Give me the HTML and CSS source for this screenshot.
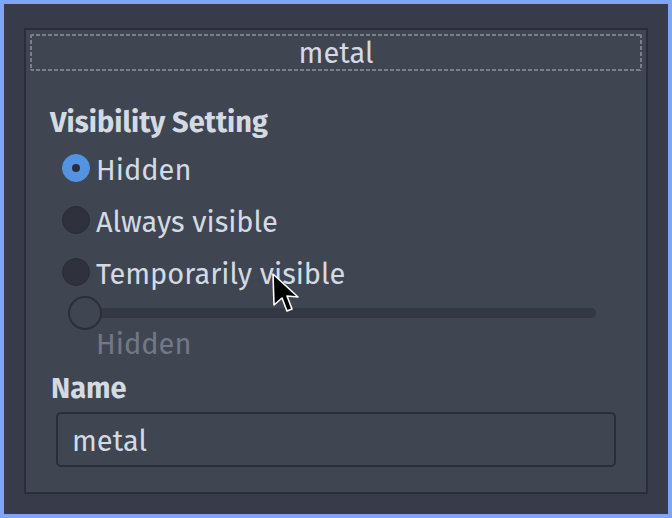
FILE: index.html
```html
<!DOCTYPE html>
<html>
<head>
<meta charset="utf-8">
<link rel="stylesheet" href="styles.css">
</head>
<body>
<div class="window">
  <div class="panel">
    <div class="title">metal</div>
    <div class="content">
      <div class="section-label vis-label">Visibility Setting</div>
      <div class="radios">
        <div class="radio-row"><span class="radio checked"></span><span class="radio-text">Hidden</span></div>
        <div class="radio-row"><span class="radio"></span><span class="radio-text">Always visible</span></div>
        <div class="radio-row"><span class="radio"></span><span class="radio-text">Temporarily visible</span></div>
      </div>
      <div class="slider"><div class="track"></div><div class="knob"></div></div>
      <div class="slider-label">Hidden</div>
      <div class="section-label name-label">Name</div>
      <div class="entry">metal</div>
    </div>
  </div>
  <svg class="cursor" width="30" height="42" viewBox="0 0 30 42">
    <path d="M2 2 L3 33 L11 26 L16 39 L21 37 L16 24 L27 25 Z" fill="#000" stroke="#fff" stroke-width="1.6" stroke-linejoin="round"/>
  </svg>
</div>
</body>
</html>
```
FILE: styles.css
```css
html, body {
  margin: 0;
  padding: 0;
}
body {
  width: 672px;
  height: 518px;
  overflow: hidden;
  font-family: "Fira Sans", "Noto Sans", "Open Sans", sans-serif;
  color: #d3dae3;
}
.window {
  position: relative;
  box-sizing: border-box;
  width: 672px;
  height: 518px;
  border: 4px solid #7ea6f5;
  background: #383c4a;
  padding: 24px 20px 20px 20px;
}
.panel {
  box-sizing: border-box;
  width: 624px;
  height: 466px;
  border: 2px solid #2b2e39;
  background: #404552;
  padding: 4px;
}
.title {
  box-sizing: border-box;
  height: 37px;
  padding-top: 2px;
  border-radius: 2px;
  background:
    repeating-linear-gradient(90deg, #7a7f8a 0 4px, transparent 4px 6px) left top / 100% 2px no-repeat,
    repeating-linear-gradient(90deg, #7a7f8a 0 4px, transparent 4px 6px) left bottom / 100% 2px no-repeat,
    repeating-linear-gradient(180deg, #7a7f8a 0 4px, transparent 4px 6px) left top / 2px 100% no-repeat,
    repeating-linear-gradient(180deg, #7a7f8a 0 4px, transparent 4px 6px) right top / 2px 100% no-repeat;
  text-align: center;
  font-size: 29px;
  line-height: 35px;
}
.content {
  padding-left: 20px;
}
.section-label {
  font-weight: bold;
  font-size: 29px;
  line-height: 30px;
}
.vis-label {
  margin-top: 37px;
}
.radios {
  margin-top: 16px;
  padding-left: 12px;
  display: flex;
  flex-direction: column;
  gap: 24px;
}
.radio-row {
  display: flex;
  align-items: center;
  height: 28px;
}
.radio {
  box-sizing: border-box;
  flex: none;
  width: 28px;
  height: 28px;
  border-radius: 50%;
  background: #2f323d;
  border: 1px solid #292c36;
  margin-right: 6px;
  position: relative;
}
.radio.checked {
  background: #5294e2;
  border-color: #5294e2;
}
.radio.checked::after {
  content: "";
  position: absolute;
  left: 50%;
  top: 50%;
  width: 8px;
  height: 8px;
  margin: -4px 0 0 -4px;
  border-radius: 50%;
  background: #2b2e39;
}
.radio-text {
  font-size: 29px;
  line-height: 28px;
  position: relative;
  top: 3px;
}
.slider {
  position: relative;
  margin-top: 10px;
  margin-left: 18px;
  width: 528px;
  height: 34px;
}
.track {
  position: absolute;
  left: 0;
  right: 0;
  top: 12px;
  height: 10px;
  border-radius: 5px;
  background: #343845;
}
.knob {
  position: absolute;
  left: 0;
  top: 0;
  box-sizing: border-box;
  width: 34px;
  height: 34px;
  border-radius: 50%;
  border: 2px solid #2c2f3a;
  background: #404552;
}
.slider-label {
  padding-left: 46px;
  font-size: 29px;
  line-height: 28px;
  color: #737886;
  margin-top: 1px;
}
.name-label {
  margin-top: 15px;
  padding-left: 1px;
}
.entry {
  box-sizing: border-box;
  margin-top: 8px;
  margin-left: 6px;
  width: 560px;
  height: 55px;
  border: 2px solid #2b2e39;
  border-radius: 5px;
  padding-left: 14px;
  padding-top: 2px;
  font-size: 29px;
  line-height: 51px;
  overflow: hidden;
}
.cursor {
  position: absolute;
  left: 267px;
  top: 268px;
}
```
